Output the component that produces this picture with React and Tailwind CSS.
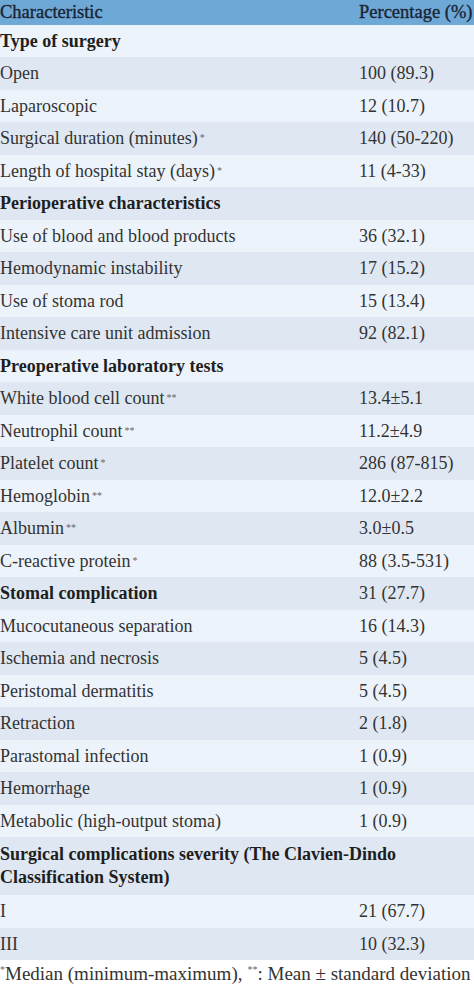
import React from "react";

const rows = [
  { t: "Type of surgery", b: true },
  { t: "Open", v: "100 (89.3)" },
  { t: "Laparoscopic", v: "12 (10.7)" },
  { t: "Surgical duration (minutes)", s: "*", v: "140 (50-220)" },
  { t: "Length of hospital stay (days)", s: "*", v: "11 (4-33)" },
  { t: "Perioperative characteristics", b: true },
  { t: "Use of blood and blood products", v: "36 (32.1)" },
  { t: "Hemodynamic instability", v: "17 (15.2)" },
  { t: "Use of stoma rod", v: "15 (13.4)" },
  { t: "Intensive care unit admission", v: "92 (82.1)" },
  { t: "Preoperative laboratory tests", b: true },
  { t: "White blood cell count", s: "**", v: "13.4±5.1" },
  { t: "Neutrophil count", s: "**", v: "11.2±4.9" },
  { t: "Platelet count", s: "*", v: "286 (87-815)" },
  { t: "Hemoglobin", s: "**", v: "12.0±2.2" },
  { t: "Albumin", s: "**", v: "3.0±0.5" },
  { t: "C-reactive protein", s: "*", v: "88 (3.5-531)" },
  { t: "Stomal complication", b: true, v: "31 (27.7)" },
  { t: "Mucocutaneous separation", v: "16 (14.3)" },
  { t: "Ischemia and necrosis", v: "5 (4.5)" },
  { t: "Peristomal dermatitis", v: "5 (4.5)" },
  { t: "Retraction", v: "2 (1.8)" },
  { t: "Parastomal infection", v: "1 (0.9)" },
  { t: "Hemorrhage", v: "1 (0.9)" },
  { t: "Metabolic (high-output stoma)", v: "1 (0.9)" },
];

function Row({ r, i }) {
  const bg = i % 2 === 0 ? "bg-[#edf3fa]" : "bg-[#dfe8f2]";
  return (
    <div className={`flex h-[32.5px] items-center ${bg}`}>
      <div
        className={`w-[359px] shrink-0 ${
          r.b ? "font-bold text-[#1e1e1e]" : "text-[#333333]"
        }`}
      >
        {r.t}
        {r.s && (
          <sup className="text-[10px] relative top-[-3px] ml-[2px] text-[#666666]">
            {r.s}
          </sup>
        )}
      </div>
      <div className="text-[#333333]">{r.v}</div>
    </div>
  );
}

export default function App() {
  return (
    <div
      className="w-[474px] h-[985px] overflow-hidden bg-white text-[18px] leading-none"
      style={{ fontFamily: '"Liberation Serif", serif' }}
    >
      <div className="flex h-[24.5px] items-center bg-[#6ea8d7] text-[#1a2433] text-[18.5px] [-webkit-text-stroke:0.35px_#1a2433]">
        <div className="w-[359px] shrink-0">Characteristic</div>
        <div className="whitespace-nowrap">Percentage (%)</div>
      </div>
      {rows.map((r, i) => (
        <Row key={i} r={r} i={i} />
      ))}
      <div className="flex h-[58px] items-center bg-[#dfe8f2] font-bold text-[#1e1e1e] leading-[23px]">
        <div>
          Surgical complications severity (The Clavien-Dindo
          <br />
          Classification System)
        </div>
      </div>
      <Row r={{ t: "I", v: "21 (67.7)" }} i={0} />
      <Row r={{ t: "III", v: "10 (32.3)" }} i={1} />
      <div className="flex h-[26px] items-center whitespace-nowrap text-[#333333] text-[19px]">
        <sup className="text-[10px] relative top-[-3px] text-[#666666]">*</sup>
        Median (minimum-maximum),{" "}
        <sup className="text-[10px] relative top-[-3px] ml-[5px] text-[#666666]">
          **
        </sup>
        : Mean ± standard deviation
      </div>
    </div>
  );
}
